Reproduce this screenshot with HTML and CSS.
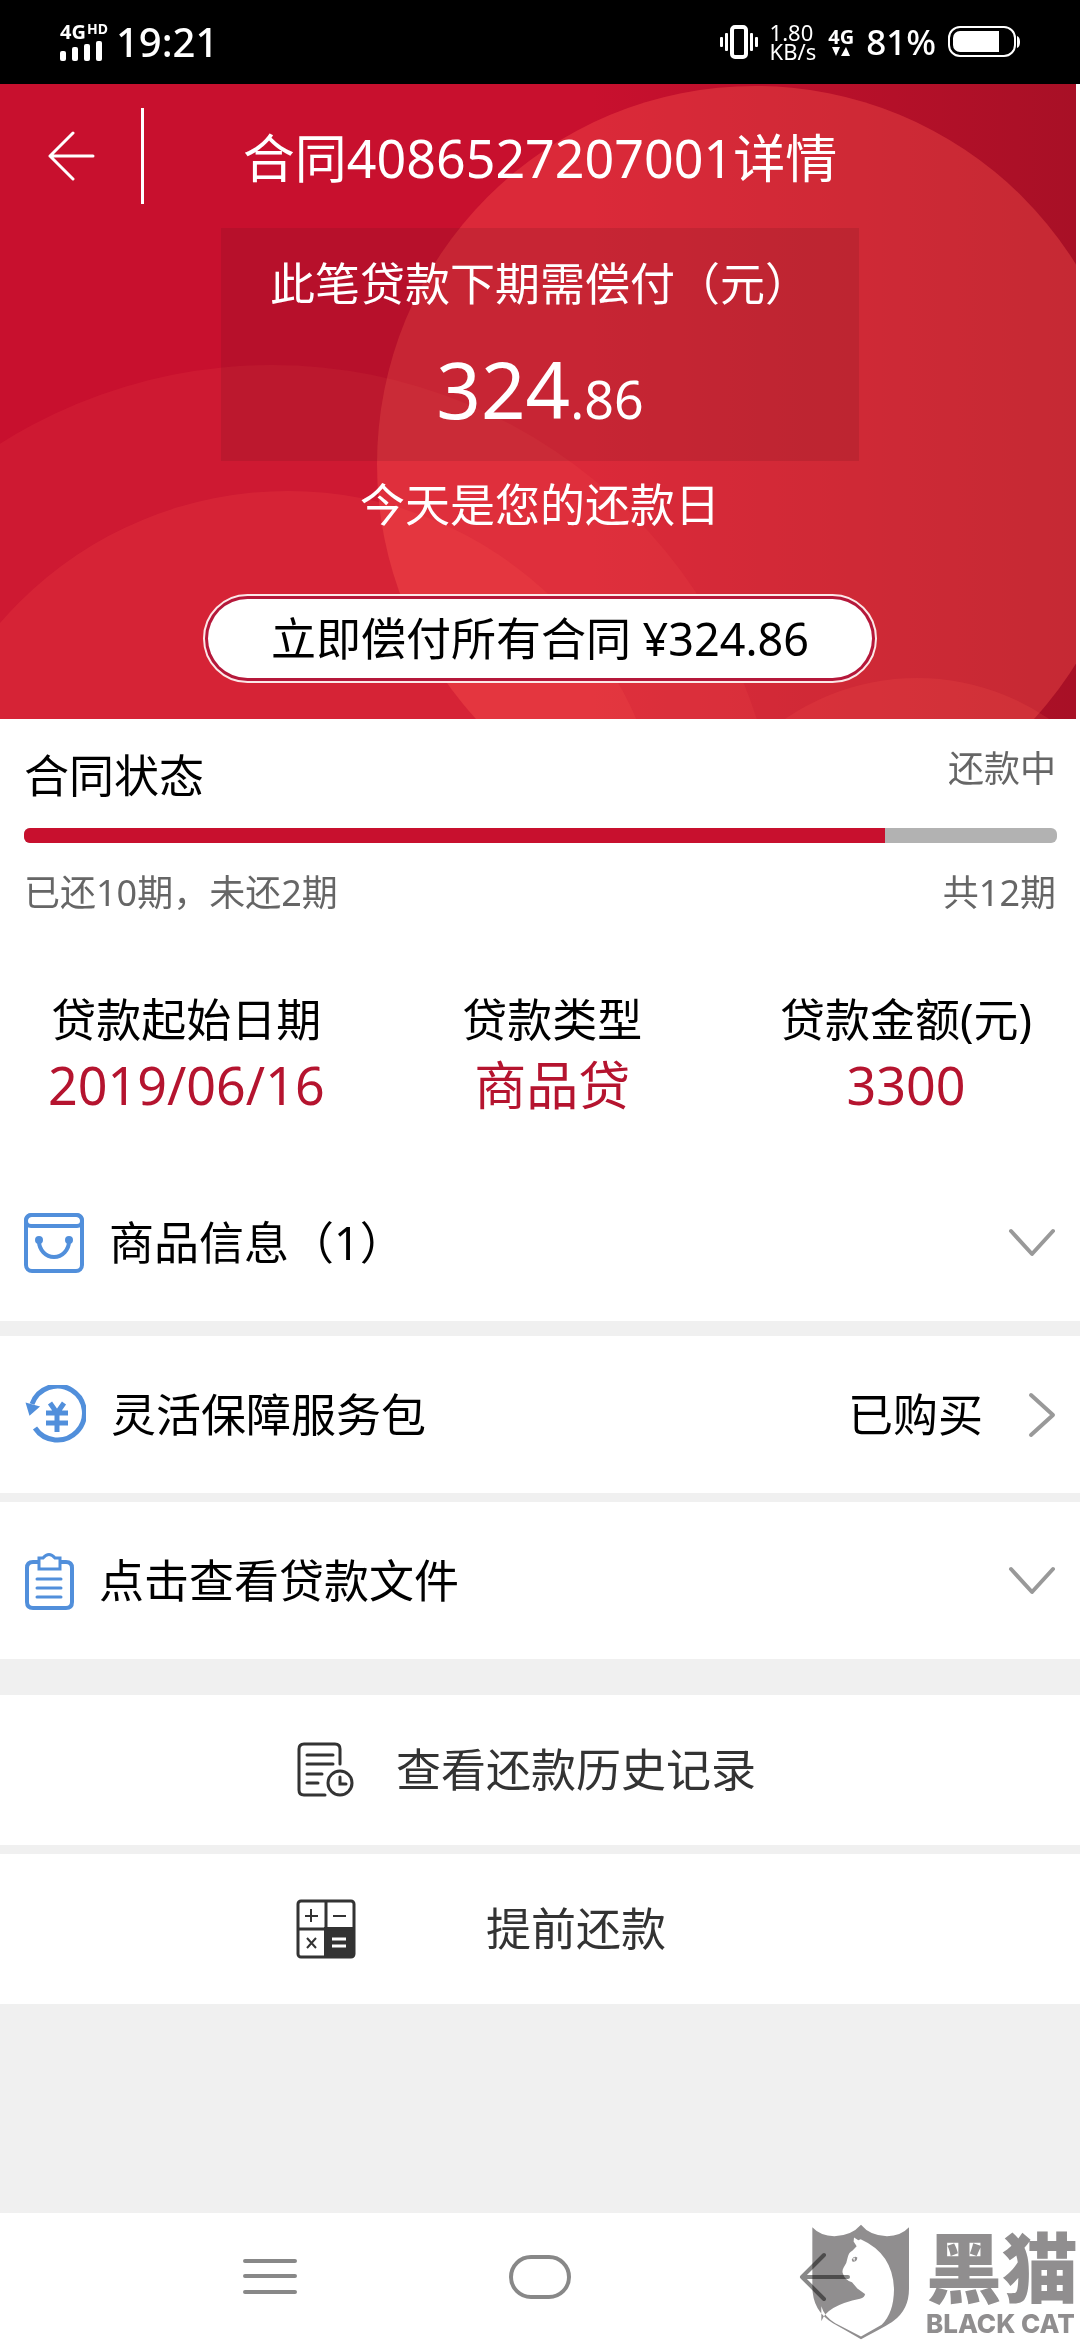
FILE: index.html
```html
<!DOCTYPE html>
<html lang="zh-CN">
<head>
<meta charset="utf-8">
<meta name="viewport" content="width=device-width, initial-scale=1">
<title>合同详情</title>
<link rel="stylesheet" href="styles.css">
</head>
<body>
<div class="app">
  <div class="statusbar">
    <div class="signal">
      <div class="signal-label"><b>4G</b><small>HD</small></div>
      <svg width="44" height="20" viewBox="0 0 44 20" fill="#fff" aria-hidden="true"><rect x="0" y="10" width="6" height="10" rx="2"/><rect x="12" y="6" width="6" height="14" rx="2"/><rect x="24" y="3" width="6" height="17" rx="2"/><rect x="36" y="0" width="6" height="20" rx="2"/></svg>
    </div>
    <time class="clock">19:21</time>
    <div class="status-right">
      <svg width="38" height="34" viewBox="0 0 38 34" fill="#fff" aria-hidden="true"><rect x="12" y="2" width="14" height="30" rx="3" fill="none" stroke="#fff" stroke-width="4"/><rect x="0" y="12" width="3" height="10" rx="1"/><rect x="5" y="8" width="3" height="18" rx="1"/><rect x="30" y="8" width="3" height="18" rx="1"/><rect x="35" y="12" width="3" height="10" rx="1"/></svg>
      <div class="speed"><span>1.80</span><span>KB/s</span></div>
      <div class="network"><b>4G</b><svg width="18" height="10" viewBox="0 0 18 10" fill="#fff" aria-hidden="true"><path d="M0 0h8L4 9zM14 0l4 9h-9z"/></svg></div>
      <span class="battery-text">81%</span>
      <svg width="72" height="32" viewBox="0 0 72 32" aria-hidden="true"><rect x="1" y="1" width="66" height="29" rx="11" fill="none" stroke="#fff" stroke-width="2"/><path d="M12 5h39v21H12a7 7 0 0 1-7-7v-7a7 7 0 0 1 7-7z" fill="#fff"/><path d="M69 10q3 1 3 6t-3 6z" fill="#fff"/></svg>
    </div>
  </div>

  <header class="hero">
    <svg class="hero-art" viewBox="0 0 1076 635" preserveAspectRatio="xMidYMid slice" aria-hidden="true">
      <defs><linearGradient id="base"><stop offset=".55" stop-color="#c8102e"/><stop offset="1" stop-color="#a81026"/></linearGradient></defs>
      <rect width="1076" height="635" fill="url(#base)"/>
      <g fill="#ff5c50">
        <circle cx="755" cy="380" r="378" opacity=".34"/>
        <circle cx="272" cy="790" r="509" opacity=".12"/>
        <circle cx="288" cy="787" r="380" opacity=".16"/>
        <circle cx="917" cy="827" r="233" opacity=".16"/>
      </g>
    </svg>
    <div class="toolbar">
      <button class="back" type="button" aria-label="返回"><svg width="50" height="50" viewBox="0 0 50 50" fill="none" stroke="#fff" stroke-width="3" stroke-linecap="round" stroke-linejoin="round" aria-hidden="true"><path d="M26 2 3 25l23 23M3 25h43"/></svg></button>
      <h1 class="title">合同4086527207001详情</h1>
    </div>
    <div class="due">
      <p class="due-label">此笔贷款下期需偿付（元）</p>
      <p class="amount">324<span>.86</span></p>
    </div>
    <p class="today">今天是您的还款日</p>
    <button class="pay" type="button"><span>立即偿付所有合同 ¥324.86</span></button>
  </header>

  <main>
    <section class="summary">
      <div class="status-line"><h2>合同状态</h2><span class="note">还款中</span></div>
      <progress class="bar" value="10" max="12" aria-label="还款进度"></progress>
      <div class="status-line"><span class="note">已还10期，未还2期</span><span class="note">共12期</span></div>
      <dl class="facts">
        <div><dt>贷款起始日期</dt><dd>2019/06/16</dd></div>
        <div><dt>贷款类型</dt><dd>商品贷</dd></div>
        <div><dt>贷款金额(元)</dt><dd>3300</dd></div>
      </dl>
      <button class="row" type="button">
        <svg width="60" height="60" viewBox="0 0 60 60" fill="none" stroke="#518fdb" stroke-width="4" aria-hidden="true"><rect x="2" y="2" width="56" height="56" rx="6"/><rect x="2" y="2" width="56" height="11" rx="5"/><path d="M15 28a15 16 0 0 0 30 0"/><circle cx="15" cy="27" r="2"/><circle cx="45" cy="27" r="2"/></svg>
        <span class="row-text">商品信息（1）</span>
        <svg class="chevron" width="48" height="30" viewBox="0 0 48 30" aria-hidden="true"><path d="M3 3l21 23L45 3"/></svg>
      </button>
    </section>

    <button class="row gap-large" type="button">
      <svg width="62" height="60" viewBox="0 0 62 60" fill="none" stroke="#518fdb" stroke-width="5" aria-hidden="true"><path d="M8 19a27 27 0 1 1 3 24"/><path d="M3 19l11 3-8 7z" fill="#518fdb" stroke-width="2"/><path d="M26 18l7 10 7-10M33 28v19M22 28h22M22 38h22" stroke-linejoin="round"/></svg>
      <span class="row-text">灵活保障服务包</span>
      <span class="row-value">已购买</span>
      <svg class="chevron" width="28" height="46" viewBox="0 0 28 46" aria-hidden="true"><path d="M3 3l22 20L3 43"/></svg>
    </button>

    <button class="row gap-small" type="button">
      <svg width="50" height="60" viewBox="0 0 50 60" fill="none" stroke="#518fdb" stroke-width="4" aria-hidden="true"><path d="M14 11H9q-6 0-6 6v34q0 6 6 6h33q6 0 6-6V17q0-6-6-6h-6"/><path d="M15 7h4q6-7 12 0h5v11H15z" stroke-width="3"/><path d="M13 28h24M13 37h24M13 46h24" stroke-width="3" stroke-linecap="round"/></svg>
      <span class="row-text">点击查看贷款文件</span>
      <svg class="chevron" width="48" height="30" viewBox="0 0 48 30" aria-hidden="true"><path d="M3 3l21 23L45 3"/></svg>
    </button>

    <div class="actions">
      <button class="action" type="button">
        <svg width="60" height="60" viewBox="0 0 60 60" fill="none" stroke="#333" stroke-width="3" stroke-linecap="round" aria-hidden="true"><path d="M44 24V9q0-5-5-5H8Q3 4 3 9v41q0 5 5 5h21M11 15h26M11 24h26M11 34h15M11 43h11"/><circle cx="44" cy="43" r="12"/><path d="M44 37v7h6"/></svg>
        <span>查看还款历史记录</span>
      </button>
      <button class="action" type="button">
        <svg width="60" height="60" viewBox="0 0 60 60" fill="none" stroke="#333" stroke-width="2" aria-hidden="true"><path d="M29 29h29v26q0 3-3 3H29z" fill="#333"/><rect x="2" y="2" width="56" height="56" rx="3" stroke-width="3"/><path d="M30 2v56M2 30h56" stroke-width="3"/><path d="M9 17h13M15 10v13M37 17h13M11 39l9 10M20 39l-9 10"/><path d="M36 40h14M36 47h14" stroke="#fff" stroke-width="3"/></svg>
        <span>提前还款</span>
      </button>
    </div>
  </main>

  <nav class="sysnav">
    <button type="button" aria-label="菜单"><svg width="54" height="46" viewBox="0 0 54 46" aria-hidden="true"><path d="M2 7h50M2 22h50M2 38h50"/></svg></button>
    <button type="button" aria-label="主页"><svg width="62" height="46" viewBox="0 0 62 46" aria-hidden="true"><rect x="2" y="3" width="58" height="40" rx="20"/></svg></button>
    <button type="button" aria-label="返回"><svg width="90" height="50" viewBox="0 0 90 50" aria-hidden="true"><path d="M59 3 37 25l22 22M37 25h46"/></svg></button>
  </nav>

  <div class="watermark">
    <svg width="100" height="117" viewBox="150 100 300 350" fill="#908e8f" aria-hidden="true">
      <path fill-rule="evenodd" d="M154 112q24 26 66 27 50 0 80-34 28 34 78 34 42-1 66-27v185q0 62-46 96-20 15-98 55-50-29-84-48-62-36-62-110zM181 349q8 30 42 51l77 40 62-35q36-35 37-105-2-108-100-152l-7 3-13-8-1 12-4-6 13 20-13 14q-10 4-14 20-2 16-12 30-6 10-2 19 6 20 27 25l16 19 24 17h-1q-1 9-15 14-98 20-116 67zM272 210q6-13 17-7-1 14-14 13z"/>
      <path d="M276 206l4 8 2-11z" fill="#fff"/>
    </svg>
    <div class="brand"><strong>黑猫</strong><span>BLACK CAT</span></div>
  </div>
</div>
</body>
</html>
```
FILE: styles.css
```css
* { box-sizing: border-box; margin: 0; padding: 0; }

body {
  background: #f0f0f0;
  color: #000;
  font-family: "Noto Sans", "Noto Sans CJK SC", sans-serif;
  font-size: 45px;
  line-height: 60px;
}

button {
  border: 0;
  background: none;
  color: inherit;
  font: inherit;
  cursor: pointer;
}

svg { display: block; flex: none; }

.app {
  position: relative;
  display: flex;
  flex-direction: column;
  min-height: 100vh;
}

/* Phone status bar */
.statusbar {
  display: flex;
  align-items: center;
  height: 84px;
  padding: 0 60px;
  background: #000;
  color: #fff;
}

.signal-label {
  display: flex;
  align-items: flex-start;
  gap: 1px;
  font-size: 20px;
  line-height: 18px;
}
.signal-label small { font-size: 14px; font-weight: 700; line-height: 12px; }

.clock {
  margin-left: 8px;
  font-size: 40px;
  font-weight: 500;
}

.status-right {
  display: flex;
  align-items: center;
  gap: 12px;
  margin-left: auto;
}
.speed { display: grid; font-size: 22px; line-height: 19px; }
.network { display: grid; justify-items: center; gap: 1px; font-size: 20px; line-height: 18px; }
.battery-text { font-size: 35px; font-weight: 500; }

/* Red header */
.hero {
  position: relative;
  display: flex;
  flex-direction: column;
  align-items: center;
  padding: 24px 0 36px;
  background: #fff;
  color: #fff;
}
.hero-art {
  position: absolute;
  top: 0;
  left: 0;
  width: calc(100% - 4px);
  height: 100%;
}
.hero > :not(.hero-art) { position: relative; }

.toolbar {
  display: grid;
  grid-template-columns: 144px 1fr 144px;
  align-items: center;
  align-self: stretch;
  height: 96px;
}
.back {
  display: flex;
  align-items: center;
  height: 96px;
  padding-left: 47px;
  border-right: 3px solid #fff;
}
.title {
  padding-top: 4px;
  font-size: 52px;
  font-weight: 400;
  text-align: center;
  white-space: nowrap;
}

.due {
  width: 59%;
  margin-top: 24px;
  padding: 26px 0 22px;
  background: rgba(90, 20, 30, .15);
  text-align: center;
}
.amount { margin-top: 25px; font-size: 78px; line-height: 100px; }
.amount span { font-size: 52px; line-height: 52px; }
.today { margin-top: 14px; }

.pay {
  margin-top: 59px;
  padding: 3px;
  border: 2px solid #fce8e8;
  border-radius: 45px;
  background: #b5183a;
  color: #000;
}
.pay span {
  display: block;
  padding: 10px 63px 9px;
  border-radius: 40px;
  background: #fff;
}

/* Contract status */
.summary { background: #fff; padding-top: 30px; }
.status-line {
  display: flex;
  justify-content: space-between;
  align-items: flex-start;
  padding: 0 24px;
}
.status-line h2 { font-size: 45px; font-weight: 400; line-height: 54px; }
.note { color: #666; font-size: 36px; line-height: 40px; }

.bar {
  display: block;
  width: calc(100% - 47px);
  height: 15px;
  margin: 25px 24px 30px;
  border: 0;
  border-radius: 6px;
  overflow: hidden;
  appearance: none;
  background: #b2b2b2;
}
.bar::-webkit-progress-bar { background: #b2b2b2; }
.bar::-webkit-progress-value { background: #c8102e; }
.bar::-moz-progress-bar { background: #c8102e; }

.facts {
  display: flex;
  justify-content: space-between;
  margin: 77px 48px 44px;
  text-align: center;
}
.facts dd { color: #b5142f; font-size: 52px; line-height: 70px; }

/* List rows */
.row {
  display: flex;
  align-items: center;
  width: 100%;
  height: 157px;
  padding: 0 24px;
  background: #fff;
  text-align: left;
}
.row-text { flex: 1; margin-left: 25px; }
.row-value { margin-right: 45px; }
.chevron {
  fill: none;
  stroke: #999;
  stroke-width: 4;
  stroke-linecap: round;
  stroke-linejoin: round;
}
.gap-large { margin-top: 15px; }
.gap-small { margin-top: 9px; }

.actions { display: grid; gap: 9px; margin-top: 36px; }
.action {
  display: flex;
  justify-content: center;
  align-items: center;
  gap: 20px;
  height: 150px;
  padding-right: 8px;
  background: #fff;
  color: #333;
}
.action span { width: 400px; }

/* System navigation */
.sysnav {
  display: grid;
  grid-template-columns: repeat(3, 1fr);
  height: 127px;
  margin-top: auto;
  padding: 0 12.5%;
  background: #fff;
}
.sysnav button { display: grid; place-items: center; }
.sysnav svg {
  fill: none;
  stroke: #888;
  stroke-width: 4;
  stroke-linecap: round;
  stroke-linejoin: round;
}

.watermark {
  position: absolute;
  right: 2px;
  bottom: 0;
  display: flex;
  gap: 15px;
  color: #908e8f;
  mix-blend-mode: multiply;
}
.brand { display: grid; align-content: end; padding-bottom: 2px; }
.brand strong { font-size: 76px; font-weight: 900; line-height: 84px; }
.brand span {
  font-family: Inter, sans-serif;
  font-size: 26px;
  font-weight: 800;
  line-height: 28px;
}
```
